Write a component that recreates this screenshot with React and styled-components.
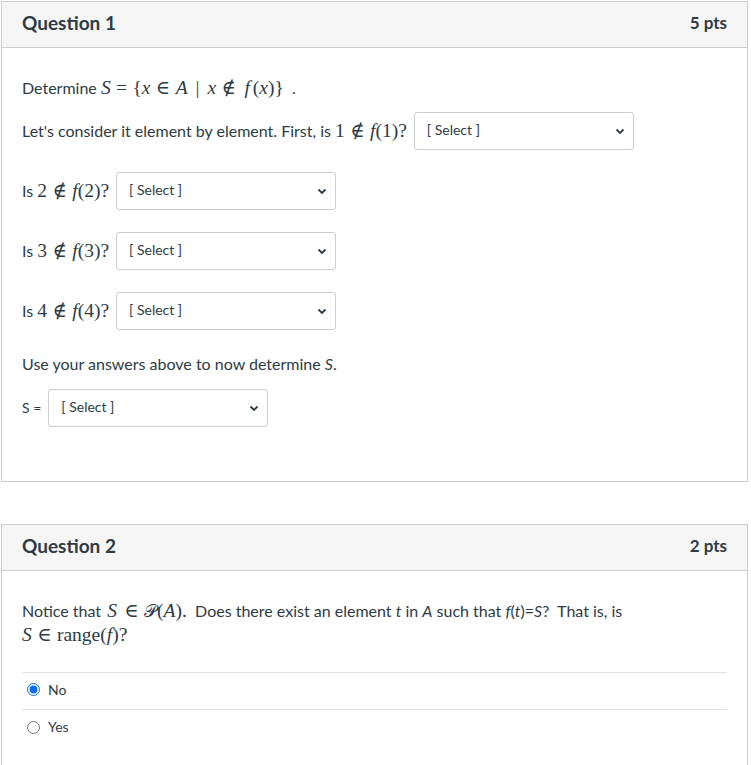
import React from "react"
import styled, { createGlobalStyle } from "styled-components"

const GlobalStyle = createGlobalStyle`
  html, body {
    margin: 0;
    padding: 0;
    background: #ffffff;
  }
  body {
    font-family: Lato, "Liberation Sans", sans-serif;
    color: #2d3b45;
  }
`

const Page = styled.div`
  padding: 1px 0 0 1px;
  width: 747px;
`

const Card = styled.div`
  border: 1px solid #c7cdd1;
  margin-bottom: 42px;
  min-height: ${props => props.minHeight || "auto"};
  box-sizing: border-box;
`

const Header = styled.div`
  display: flex;
  justify-content: space-between;
  align-items: center;
  height: 46px;
  padding: 0 20px 4px;
  box-sizing: border-box;
  background: #f5f5f5;
  border-bottom: 1px solid #c7cdd1;
`

const Title = styled.h2`
  margin: 0;
  font-size: 19px;
  font-weight: 700;
  color: #2d3b45;
`

const Points = styled.span`
  font-size: 17px;
  font-weight: 700;
  color: #2d3b45;
`

const Body = styled.div`
  padding: 28px 20px 0;
  font-size: 16px;
  line-height: 24px;
`

const Para = styled.p`
  margin: 0 0 ${props => props.gap || "12px"};
`

const Row = styled.div`
  display: flex;
  align-items: center;
  height: 38px;
  margin-bottom: ${props => props.gap || "22px"};
`

const Label = styled.span`
  margin-right: ${props => props.small ? "7px" : "7px"};
  white-space: nowrap;
  font-size: ${props => props.small ? "14px" : "16px"};
`

const M = styled.span`
  font-family: "Liberation Serif", "DejaVu Serif", serif;
  font-size: 19.5px;
  font-style: ${props => props.i ? "italic" : "normal"};
  margin: 0 ${props => props.rel ? "5.4px" : props.pad || "0"};
`

const Cal = styled.span`
  font-family: "DejaVu Serif", "Liberation Serif", serif;
  font-size: 18px;
`

const SelectWrap = styled.div`
  position: relative;
  width: ${props => props.width || "220px"};
  height: 38px;
`

const Select = styled.select`
  appearance: none;
  width: 100%;
  height: 100%;
  box-sizing: border-box;
  border: 1px solid #c7cdd1;
  border-radius: 3px;
  background: #fff;
  padding: 0 12px 4px;
  font-family: Lato, "Liberation Sans", sans-serif;
  font-size: 14px;
  color: #2d3b45;
`

const Chevron = styled.svg`
  position: absolute;
  right: 9px;
  top: 16px;
  pointer-events: none;
`

const Answers = styled.div`
  margin-top: 25px;
  border-top: 1px solid #dde2e5;
`

const Answer = styled.label`
  display: flex;
  align-items: center;
  height: 37px;
  box-sizing: border-box;
  padding: 0 0 3px 5px;
  border-bottom: ${props => props.last ? "none" : "1px solid #dde2e5"};
  font-size: 14px;
`

const Radio = styled.input`
  margin: 0 8px 0 0;
  width: 13px;
  height: 13px;
  accent-color: #0b6cf0;
`

const Dropdown = ({ width }) => (
  <SelectWrap width={width}>
    <Select defaultValue="">
      <option value="">[ Select ]</option>
    </Select>
    <Chevron width="10" height="7" viewBox="0 0 10 7">
      <path d="M1.5 1.5 L5 5 L8.5 1.5" fill="none" stroke="#2d3b45" strokeWidth="1.8" />
    </Chevron>
  </SelectWrap>
)

const ElementRow = ({ n, gap }) => (
  <Row gap={gap}>
    <Label>
      Is <M>{n}</M><M rel>∉</M><M i>f</M><M>({n})?</M>
    </Label>
    <Dropdown />
  </Row>
)

const App = () => {
  return (
    <Page>
      <GlobalStyle />
      <Card minHeight="481px">
        <Header>
          <Title>Question 1</Title>
          <Points>5 pts</Points>
        </Header>
        <Body>
          <Para>
            Determine <M i>S</M><M rel>=</M><M>{"{"}</M><M i>x</M><M rel>∈</M><M i>A</M><M pad="8px">|</M><M i>x</M><M rel>∉</M><M i pad="3px">f</M><M>(</M><M i>x</M><M>){"}"}</M>&nbsp; .
          </Para>
          <Row>
            <Label>
              Let's consider it element by element. First, is <M>1</M><M rel>∉</M><M i>f</M><M>(1)?</M>
            </Label>
            <Dropdown />
          </Row>
          <ElementRow n="2" />
          <ElementRow n="3" />
          <ElementRow n="4" gap="22px" />
          <Para gap="13px">Use your answers above to now determine <i>S</i>.</Para>
          <Row gap="0">
            <Label small>S =</Label>
            <Dropdown />
          </Row>
        </Body>
      </Card>
      <Card minHeight="260px">
        <Header>
          <Title>Question 2</Title>
          <Points>2 pts</Points>
        </Header>
        <Body>
          <Para gap="0">
            Notice that <M i pad="2px">S</M><M rel>∈</M><M><Cal>𝒫</Cal></M><M>(</M><M i>A</M><M>).</M>&nbsp; Does there exist an element <i>t</i> in <i>A</i> such that <i>f</i>(<i>t</i>)=<i>S</i>?&nbsp; That is, is
            <br />
            <M i>S</M><M rel>∈</M><M>range(</M><M i>f</M><M>)?</M>
          </Para>
          <Answers>
            <Answer>
              <Radio type="radio" name="q2" defaultChecked />
              No
            </Answer>
            <Answer last>
              <Radio type="radio" name="q2" />
              Yes
            </Answer>
          </Answers>
        </Body>
      </Card>
    </Page>
  )
}

export default App
